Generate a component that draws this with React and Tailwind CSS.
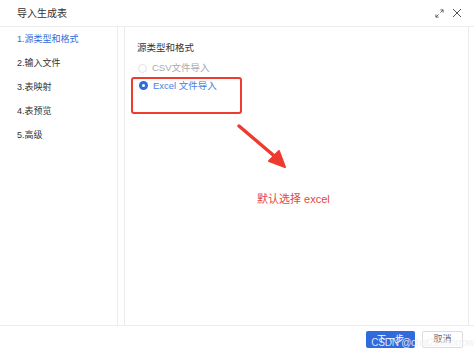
import React from "react";

const steps = ["1.源类型和格式", "2.输入文件", "3.表映射", "4.表预览", "5.高级"];

const App = () => {
    return (
        <div
            className="w-[474px] h-[353px] bg-white flex flex-col relative overflow-hidden text-[#333]"
            style={{ fontFamily: '"Liberation Sans", "Noto Sans CJK SC", sans-serif' }}
        >
            {/* Header */}
            <div className="h-[27px] flex items-center justify-between pl-[17px] pr-[12px] border-b border-[#ececec] shrink-0">
                <span className="text-[10px] text-[#333]">导入生成表</span>
                <div className="flex items-center gap-[8px] text-[#666]">
                    <svg width="9" height="9" viewBox="0 0 10 10" fill="none" stroke="#555" strokeWidth="1">
                        <path d="M6 1h3v3M9 1L6 4M4 9H1V6M1 9l3-3" />
                    </svg>
                    <svg width="10" height="10" viewBox="0 0 10 10" fill="none" stroke="#555" strokeWidth="1">
                        <path d="M1 1l8 8M9 1l-8 8" />
                    </svg>
                </div>
            </div>

            {/* Body */}
            <div className="flex flex-1 min-h-0 border-b border-[#ececec]">
                <div className="w-[118px] border-r border-[#ececec] pl-[17px] pt-[1px] flex flex-col shrink-0">
                    {steps.map((s, i) => (
                        <div
                            key={s}
                            className={`h-[24px] flex items-center text-[9px] ${i === 0 ? "text-[#2f6bdc]" : "text-[#333]"}`}
                        >
                            {s}
                        </div>
                    ))}
                </div>
                <div className="flex-1 ml-[6px] mr-[5px] border-l border-r border-[#ececec] relative">
                    <div className="pl-[12px] pt-[14px] flex flex-col">
                        <span className="text-[9.5px] text-[#333]">源类型和格式</span>
                        <div className="flex items-center gap-[5px] mt-[6px] pl-[1px]">
                            <span className="w-[9px] h-[9px] rounded-full border border-[#e2e2e2] bg-white" />
                            <span className="text-[9.5px] text-[#aaa]">CSV文件导入</span>
                        </div>
                        <div className="w-[111px] h-[37px] -ml-[6px] mt-[1px] border-2 border-[#ec3d30] rounded-[3px] pl-[5px] pt-[0px]">
                            <div className="flex items-center gap-[5px] pl-[1px]">
                                <span className="w-[9px] h-[9px] rounded-full bg-[#2f6bdc] flex items-center justify-center">
                                    <span className="w-[3px] h-[3px] rounded-full bg-white" />
                                </span>
                                <span className="text-[9.5px] text-[#4a7fe0]">Excel 文件导入</span>
                            </div>
                        </div>
                    </div>

                    {/* Annotation arrow */}
                    <svg className="absolute left-[110px] top-[96px]" width="60" height="50" viewBox="0 0 60 50">
                        <path d="M4 3 L44 37" stroke="#ee3b2e" strokeWidth="3.5" strokeLinecap="round" />
                        <path d="M50 44 L34 38 L44 28 Z" fill="#ee3b2e" stroke="#ee3b2e" strokeWidth="2" strokeLinejoin="round" />
                    </svg>
                    <span className="absolute left-[132px] top-[164px] text-[11px] text-[#e5483b]">默认选择 excel</span>
                </div>
            </div>

            {/* Footer */}
            <div className="h-[27px] flex items-center justify-end gap-[7px] pr-[11px] shrink-0">
                <button className="w-[49px] h-[17px] bg-[#2f6bdc] text-white text-[9px] rounded-[2px]">下一步</button>
                <button className="w-[41px] h-[17px] bg-white border border-[#dcdcdc] text-[#666] text-[9px] rounded-[2px]">取消</button>
            </div>

            {/* Watermark */}
            <span className="absolute right-[0px] bottom-[3px] text-[10px] text-[#eef0f4] opacity-90 tracking-tight">
                CSDN @chat2tomorrow
            </span>
        </div>
    );
};

export default App;
